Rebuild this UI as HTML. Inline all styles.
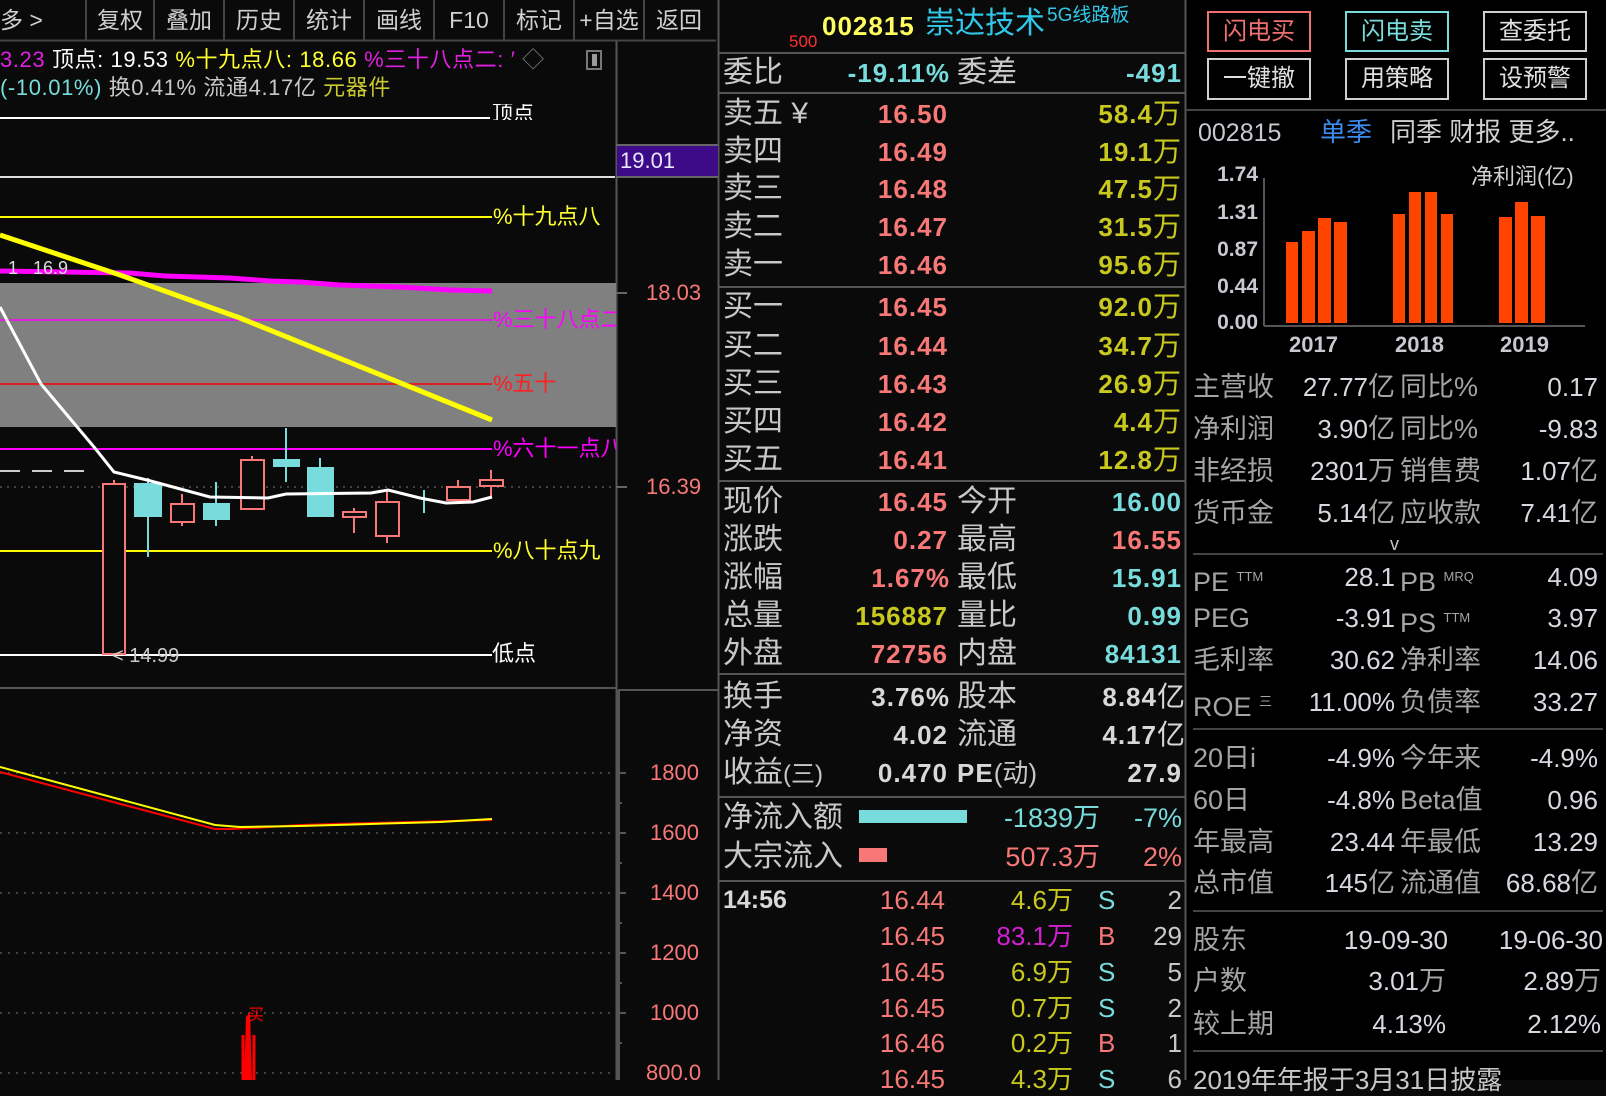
<!DOCTYPE html>
<html><head><meta charset="utf-8">
<style>
*{margin:0;padding:0;box-sizing:border-box}
body{width:1606px;height:1080px;background:#0a0a0a;overflow:hidden;position:relative;font-family:"Liberation Sans","Noto Sans CJK SC",sans-serif;color:#c8c8c8}
.t{position:absolute;white-space:nowrap;line-height:32px;height:32px}
.r{text-align:right}
.c{font-size:30px}
.n{font-size:26px;font-weight:bold;letter-spacing:1px}
.tb{position:absolute;top:0;height:40px;line-height:40px;font-size:23px;color:#d0d0d0;text-align:center}
.sal{color:#f87878}.yel{color:#c8c81e}.cy{color:#78dcdc}.wh{color:#d8d8d8}.mg{color:#e020e0}
.rp{font-size:27px;color:#a4a4a4}
.rv{font-size:26px;color:#d8d8e0}
.btn{position:absolute;border:2px solid #d0d0d0;font-size:24px;text-align:center;line-height:37px;color:#e0e0e0}
</style></head><body>
<div style="position:absolute;left:1186px;top:0;width:420px;height:1080px;background:#000"></div>
<svg width="1606" height="1080" style="position:absolute;left:0;top:0">
<line x1="0" y1="40.5" x2="716" y2="40.5" stroke="#444" stroke-width="2"/>
<g stroke="#444" stroke-width="2">
<line x1="86" y1="0" x2="86" y2="40"/><line x1="154" y1="0" x2="154" y2="40"/><line x1="224" y1="0" x2="224" y2="40"/><line x1="294" y1="0" x2="294" y2="40"/><line x1="364" y1="0" x2="364" y2="40"/><line x1="434" y1="0" x2="434" y2="40"/><line x1="504" y1="0" x2="504" y2="40"/><line x1="574" y1="0" x2="574" y2="40"/><line x1="644" y1="0" x2="644" y2="40"/>
</g>
<line x1="616.5" y1="41" x2="616.5" y2="1080" stroke="#555" stroke-width="2"/>
<line x1="718.5" y1="0" x2="718.5" y2="1080" stroke="#555" stroke-width="2"/>
<line x1="1185.5" y1="0" x2="1185.5" y2="1080" stroke="#555" stroke-width="2"/>
<rect x="617" y="145" width="101" height="32" fill="#3e0b88"/>
<line x1="616" y1="145" x2="718" y2="145" stroke="#666" stroke-width="2"/>
<line x1="616" y1="177" x2="718" y2="177" stroke="#666" stroke-width="2"/>
<rect x="0" y="283" width="616" height="144" fill="#808080"/>
<line x1="0" y1="118" x2="490" y2="118" stroke="#fff" stroke-width="2"/>
<line x1="0" y1="177" x2="615" y2="177" stroke="#ddd" stroke-width="2"/>
<line x1="0" y1="217" x2="492" y2="217" stroke="#ffff00" stroke-width="2"/>
<line x1="0" y1="320" x2="492" y2="320" stroke="#ff00ff" stroke-width="1.5"/>
<line x1="0" y1="384" x2="492" y2="384" stroke="#ff0000" stroke-width="1.5"/>
<line x1="0" y1="449" x2="492" y2="449" stroke="#ff00ff" stroke-width="2"/>
<line x1="0" y1="487" x2="616" y2="487" stroke="#555" stroke-width="1.5" stroke-dasharray="2 5"/>
<line x1="0" y1="551" x2="492" y2="551" stroke="#ffff00" stroke-width="2"/>
<line x1="0" y1="655" x2="492" y2="655" stroke="#fff" stroke-width="2"/>
<line x1="0" y1="471" x2="92" y2="471" stroke="#ccc" stroke-width="2" stroke-dasharray="20 12"/>
<line x1="616" y1="293" x2="627" y2="293" stroke="#666" stroke-width="2"/>
<line x1="616" y1="487" x2="627" y2="487" stroke="#666" stroke-width="2"/>
<polyline points="0,271 130,273 165,276 230,278 270,281 300,282 340,285 400,287 450,290 492,291" fill="none" stroke="#ff00ff" stroke-width="5"/>
<polyline points="0,235 120,275 240,318 492,420" fill="none" stroke="#ffff00" stroke-width="5"/>
<g stroke="#f87878" stroke-width="2" fill="#0a0a0a">
<line x1="114" y1="480" x2="114" y2="484"/><rect x="103" y="484" width="22" height="170"/>
<line x1="182" y1="494" x2="182" y2="526"/><rect x="171" y="504" width="23" height="18"/>
<line x1="252" y1="456" x2="252" y2="509"/><rect x="241" y="460" width="23" height="49"/>
<line x1="354" y1="508" x2="354" y2="533"/><rect x="343" y="512" width="23" height="5"/>
<line x1="387" y1="489" x2="387" y2="543"/><rect x="376" y="502" width="23" height="34"/>
<line x1="458" y1="480" x2="458" y2="503"/><rect x="447" y="487" width="23" height="13"/>
<line x1="491" y1="470" x2="491" y2="497"/><rect x="480" y="480" width="23" height="6"/>
</g>
<g stroke="#78dcdc" stroke-width="2" fill="#78dcdc">
<line x1="148" y1="478" x2="148" y2="557"/><rect x="135" y="484" width="26" height="32"/>
<line x1="216" y1="482" x2="216" y2="526"/><rect x="204" y="504" width="25" height="15"/>
<line x1="286" y1="428" x2="286" y2="482"/><rect x="274" y="460" width="25" height="6"/>
<line x1="320" y1="458" x2="320" y2="516"/><rect x="308" y="468" width="25" height="48"/>
<line x1="424" y1="490" x2="424" y2="513"/>
</g>
<polyline points="0,307 41,384 94,447 114,472 147,480 210,497 268,498 286,494 371,493 388,490 420,498 446,503 473,502 492,497" fill="none" stroke="#fff" stroke-width="3"/>
<line x1="0" y1="688" x2="616" y2="688" stroke="#555" stroke-width="2"/>
<line x1="618" y1="690" x2="718" y2="690" stroke="#555" stroke-width="2"/>
<line x1="618.5" y1="690" x2="618.5" y2="1080" stroke="#555" stroke-width="3"/>
<g stroke="#555" stroke-width="1.5" stroke-dasharray="2 6">
<line x1="0" y1="773" x2="612" y2="773"/><line x1="0" y1="833" x2="612" y2="833"/><line x1="0" y1="893" x2="612" y2="893"/><line x1="0" y1="953" x2="612" y2="953"/><line x1="0" y1="1013" x2="612" y2="1013"/><line x1="0" y1="1073" x2="612" y2="1073"/>
</g>
<g stroke="#555" stroke-width="2">
<line x1="618" y1="773" x2="626" y2="773"/><line x1="618" y1="803" x2="622" y2="803"/><line x1="618" y1="833" x2="626" y2="833"/><line x1="618" y1="863" x2="622" y2="863"/><line x1="618" y1="893" x2="626" y2="893"/><line x1="618" y1="923" x2="622" y2="923"/><line x1="618" y1="953" x2="626" y2="953"/><line x1="618" y1="983" x2="622" y2="983"/><line x1="618" y1="1013" x2="626" y2="1013"/><line x1="618" y1="1043" x2="622" y2="1043"/>
</g>
<polyline points="0,772 215,829 232,829 270,827 300,825 370,823 450,821 492,820" fill="none" stroke="#ff0000" stroke-width="2"/>
<polyline points="0,767 215,825 240,827 300,826 370,824 440,822 492,819" fill="none" stroke="#ffff00" stroke-width="2"/>
<path d="M246 1017 L250 1012 L252 1080 L244 1080 Z" fill="#ff0000"/>
<path d="M243 1035 L243 1080 M254 1035 L254 1080" stroke="#ff0000" stroke-width="3"/>
<g stroke="#555" stroke-width="2">
<line x1="719" y1="53" x2="1185" y2="53"/><line x1="719" y1="93" x2="1185" y2="93"/><line x1="719" y1="287" x2="1185" y2="287"/><line x1="719" y1="481" x2="1185" y2="481"/><line x1="719" y1="674" x2="1185" y2="674"/><line x1="719" y1="797" x2="1185" y2="797"/><line x1="719" y1="881" x2="1185" y2="881"/>
</g>
<rect x="859" y="810" width="108" height="13" fill="#78dcdc"/>
<rect x="859" y="848" width="28" height="14" fill="#f87878"/>
<g stroke="#444" stroke-width="2">
<line x1="1186" y1="110" x2="1606" y2="110"/>
<line x1="1193" y1="554" x2="1603" y2="554"/><line x1="1193" y1="729" x2="1603" y2="729"/><line x1="1193" y1="911" x2="1603" y2="911"/><line x1="1193" y1="1051" x2="1603" y2="1051"/>
</g>
<line x1="1264" y1="178" x2="1264" y2="326" stroke="#555" stroke-width="2"/>
<line x1="1264" y1="326" x2="1585" y2="326" stroke="#555" stroke-width="2"/>
<g fill="#ff4400">
<rect x="1286" y="242" width="12" height="81"/><rect x="1302" y="231" width="13" height="92"/><rect x="1318" y="218" width="13" height="105"/><rect x="1334" y="222" width="13" height="101"/>
<rect x="1393" y="214" width="12" height="109"/><rect x="1409" y="192" width="12" height="131"/><rect x="1425" y="192" width="12" height="131"/><rect x="1441" y="214" width="12" height="109"/>
<rect x="1499" y="217" width="13" height="106"/><rect x="1515" y="202" width="13" height="121"/><rect x="1531" y="216" width="14" height="107"/>
</g>
<rect x="587" y="51" width="14" height="18" fill="none" stroke="#777" stroke-width="2"/><rect x="592" y="54" width="5" height="12" fill="#999"/>
</svg>

<div class="tb" style="left:0;width:60px;text-align:left">多 &gt;</div>
<div class="tb" style="left:86px;width:68px">复权</div>
<div class="tb" style="left:154px;width:70px">叠加</div>
<div class="tb" style="left:224px;width:70px">历史</div>
<div class="tb" style="left:294px;width:70px">统计</div>
<div class="tb" style="left:364px;width:70px">画线</div>
<div class="tb" style="left:434px;width:70px">F10</div>
<div class="tb" style="left:504px;width:70px">标记</div>
<div class="tb" style="left:574px;width:70px">+自选</div>
<div class="tb" style="left:644px;width:72px;text-align:left;padding-left:12px">返回</div>

<div class="t" style="left:0;top:44px;font-size:22px;letter-spacing:0.6px"><span class="mg">3.23</span> <span style="color:#fff">顶点: 19.53</span> <span style="color:#ffff30">%十九点八: 18.66</span> <span class="mg">%三十八点二: ′</span> <span style="color:#777">◇</span></div>
<div class="t" style="left:0;top:72px;font-size:22px;letter-spacing:0.6px"><span class="cy">(-10.01%)</span> 换0.41% 流通4.17亿 <span style="color:#c8c830">元器件</span></div>

<div class="t" style="left:492px;top:104px;font-size:21px;color:#fff;height:16px;line-height:20px;overflow:hidden">顶点</div>
<div class="t" style="left:493px;top:201px;font-size:22px;color:#ffff30">%十九点八</div>
<div class="t" style="left:493px;top:304px;font-size:22px;color:#ff00ff;width:123px;overflow:hidden">%三十八点二</div>
<div class="t" style="left:493px;top:368px;font-size:22px;color:#ff2020">%五十</div>
<div class="t" style="left:493px;top:433px;font-size:22px;color:#ff00ff;width:123px;overflow:hidden">%六十一点八</div>
<div class="t" style="left:493px;top:535px;font-size:22px;color:#ffff30">%八十点九</div>
<div class="t" style="left:492px;top:638px;font-size:22px;color:#fff">低点</div>
<div class="t" style="left:112px;top:640px;font-size:20px;color:#ccc">&lt; 14.99</div>
<div class="t" style="left:8px;top:252px;font-size:18px;color:#ddd">1&nbsp;&nbsp;&nbsp;16.9</div>
<div class="t" style="left:248px;top:1000px;font-size:16px;color:#ff0000">买</div>

<div class="t" style="left:620px;top:145px;font-size:22px;color:#e8e8ff">19.01</div>
<div class="t sal" style="left:646px;top:277px;font-size:22px">18.03</div>
<div class="t sal" style="left:646px;top:471px;font-size:22px">16.39</div>
<div class="t sal" style="left:650px;top:757px;font-size:22px">1800</div>
<div class="t sal" style="left:650px;top:817px;font-size:22px">1600</div>
<div class="t sal" style="left:650px;top:877px;font-size:22px">1400</div>
<div class="t sal" style="left:650px;top:937px;font-size:22px">1200</div>
<div class="t sal" style="left:650px;top:997px;font-size:22px">1000</div>
<div class="t sal" style="left:646px;top:1057px;font-size:22px">800.0</div>

<div class="t" style="left:789px;top:26px;font-size:17px;color:#ff3030">500</div>
<div class="t" style="left:822px;top:10px;font-size:26px;font-weight:bold;color:#ffff60;letter-spacing:1px">002815</div>
<div class="t" style="left:925px;top:8px;font-size:30px;color:#30c8e8">崇达技术</div>
<div class="t" style="left:1047px;top:0px;font-size:19px;color:#30c8e8">5G线路板</div>

<div class="t c" style="left:723px;top:57px">委比</div>
<div class="t n r cy" style="right:656px;top:57px">-19.11%</div>
<div class="t c" style="left:957px;top:57px">委差</div>
<div class="t n r cy" style="right:424px;top:57px">-491</div>

<div class="t c" style="left:723px;top:98px">卖五 ¥</div>
<div class="t c" style="left:723px;top:136px">卖四</div>
<div class="t c" style="left:723px;top:173px">卖三</div>
<div class="t c" style="left:723px;top:211px">卖二</div>
<div class="t c" style="left:723px;top:249px">卖一</div>
<div class="t n r sal" style="right:658px;top:98px">16.50</div>
<div class="t n r sal" style="right:658px;top:136px">16.49</div>
<div class="t n r sal" style="right:658px;top:173px">16.48</div>
<div class="t n r sal" style="right:658px;top:211px">16.47</div>
<div class="t n r sal" style="right:658px;top:249px">16.46</div>
<div class="t n r yel" style="right:424px;top:98px">58.4<span style="font-weight:normal;font-size:28px">万</span></div>
<div class="t n r yel" style="right:424px;top:136px">19.1<span style="font-weight:normal;font-size:28px">万</span></div>
<div class="t n r yel" style="right:424px;top:173px">47.5<span style="font-weight:normal;font-size:28px">万</span></div>
<div class="t n r yel" style="right:424px;top:211px">31.5<span style="font-weight:normal;font-size:28px">万</span></div>
<div class="t n r yel" style="right:424px;top:249px">95.6<span style="font-weight:normal;font-size:28px">万</span></div>

<div class="t c" style="left:723px;top:291px">买一</div>
<div class="t c" style="left:723px;top:330px">买二</div>
<div class="t c" style="left:723px;top:368px">买三</div>
<div class="t c" style="left:723px;top:406px">买四</div>
<div class="t c" style="left:723px;top:444px">买五</div>
<div class="t n r sal" style="right:658px;top:291px">16.45</div>
<div class="t n r sal" style="right:658px;top:330px">16.44</div>
<div class="t n r sal" style="right:658px;top:368px">16.43</div>
<div class="t n r sal" style="right:658px;top:406px">16.42</div>
<div class="t n r sal" style="right:658px;top:444px">16.41</div>
<div class="t n r yel" style="right:424px;top:291px">92.0<span style="font-weight:normal;font-size:28px">万</span></div>
<div class="t n r yel" style="right:424px;top:330px">34.7<span style="font-weight:normal;font-size:28px">万</span></div>
<div class="t n r yel" style="right:424px;top:368px">26.9<span style="font-weight:normal;font-size:28px">万</span></div>
<div class="t n r yel" style="right:424px;top:406px">4.4<span style="font-weight:normal;font-size:28px">万</span></div>
<div class="t n r yel" style="right:424px;top:444px">12.8<span style="font-weight:normal;font-size:28px">万</span></div>

<div class="t c" style="left:723px;top:486px">现价</div><div class="t n r sal" style="right:658px;top:486px">16.45</div><div class="t c" style="left:957px;top:486px">今开</div><div class="t n r cy" style="right:424px;top:486px">16.00</div>
<div class="t c" style="left:723px;top:524px">涨跌</div><div class="t n r sal" style="right:658px;top:524px">0.27</div><div class="t c" style="left:957px;top:524px">最高</div><div class="t n r sal" style="right:424px;top:524px">16.55</div>
<div class="t c" style="left:723px;top:562px">涨幅</div><div class="t n r sal" style="right:656px;top:562px">1.67%</div><div class="t c" style="left:957px;top:562px">最低</div><div class="t n r cy" style="right:424px;top:562px">15.91</div>
<div class="t c" style="left:723px;top:600px">总量</div><div class="t n r yel" style="right:658px;top:600px">156887</div><div class="t c" style="left:957px;top:600px">量比</div><div class="t n r cy" style="right:424px;top:600px">0.99</div>
<div class="t c" style="left:723px;top:638px">外盘</div><div class="t n r sal" style="right:658px;top:638px">72756</div><div class="t c" style="left:957px;top:638px">内盘</div><div class="t n r cy" style="right:424px;top:638px">84131</div>

<div class="t c" style="left:723px;top:681px">换手</div><div class="t n r wh" style="right:656px;top:681px">3.76%</div><div class="t c" style="left:957px;top:681px">股本</div><div class="t n r wh" style="right:420px;top:681px">8.84<span style="font-weight:normal;font-size:28px">亿</span></div>
<div class="t c" style="left:723px;top:719px">净资</div><div class="t n r wh" style="right:658px;top:719px">4.02</div><div class="t c" style="left:957px;top:719px">流通</div><div class="t n r wh" style="right:420px;top:719px">4.17<span style="font-weight:normal;font-size:28px">亿</span></div>
<div class="t c" style="left:723px;top:757px">收益<span style="font-size:24px">(三)</span></div><div class="t n r wh" style="right:658px;top:757px">0.470</div><div class="t" style="left:957px;top:757px"><span class="n wh">PE</span><span style="font-size:26px">(动)</span></div><div class="t n r wh" style="right:424px;top:757px">27.9</div>

<div class="t c" style="left:723px;top:802px">净流入额</div><div class="t r cy" style="right:506px;top:802px;font-size:27px">-1839万</div><div class="t r cy" style="right:424px;top:802px;font-size:27px">-7%</div>
<div class="t c" style="left:723px;top:841px">大宗流入</div><div class="t r sal" style="right:506px;top:841px;font-size:27px">507.3万</div><div class="t r sal" style="right:424px;top:841px;font-size:27px">2%</div>

<div class="t wh" style="left:723px;top:884px;font-size:25px;font-weight:bold">14:56</div>
<div class="t r sal" style="right:661px;top:884px;font-size:26px">16.44</div><div class="t r yel" style="right:533px;top:884px;font-size:26px">4.6万</div><div class="t cy" style="left:1098px;top:884px;font-size:26px">S</div><div class="t r" style="right:424px;top:884px;font-size:26px">2</div>
<div class="t r sal" style="right:661px;top:920px;font-size:26px">16.45</div><div class="t r" style="right:533px;top:920px;font-size:26px;color:#d020d0">83.1万</div><div class="t sal" style="left:1098px;top:920px;font-size:26px">B</div><div class="t r" style="right:424px;top:920px;font-size:26px">29</div>
<div class="t r sal" style="right:661px;top:956px;font-size:26px">16.45</div><div class="t r yel" style="right:533px;top:956px;font-size:26px">6.9万</div><div class="t cy" style="left:1098px;top:956px;font-size:26px">S</div><div class="t r" style="right:424px;top:956px;font-size:26px">5</div>
<div class="t r sal" style="right:661px;top:992px;font-size:26px">16.45</div><div class="t r yel" style="right:533px;top:992px;font-size:26px">0.7万</div><div class="t cy" style="left:1098px;top:992px;font-size:26px">S</div><div class="t r" style="right:424px;top:992px;font-size:26px">2</div>
<div class="t r sal" style="right:661px;top:1027px;font-size:26px">16.46</div><div class="t r yel" style="right:533px;top:1027px;font-size:26px">0.2万</div><div class="t sal" style="left:1098px;top:1027px;font-size:26px">B</div><div class="t r" style="right:424px;top:1027px;font-size:26px">1</div>
<div class="t r sal" style="right:661px;top:1063px;font-size:26px">16.45</div><div class="t r yel" style="right:533px;top:1063px;font-size:26px">4.3万</div><div class="t cy" style="left:1098px;top:1063px;font-size:26px">S</div><div class="t r" style="right:424px;top:1063px;font-size:26px">6</div>

<div class="btn" style="left:1207px;top:11px;width:104px;height:41px;border-color:#f07070;color:#f07070">闪电买</div>
<div class="btn" style="left:1345px;top:11px;width:104px;height:41px;border-color:#78dcdc;color:#78dcdc">闪电卖</div>
<div class="btn" style="left:1483px;top:11px;width:104px;height:41px">查委托</div>
<div class="btn" style="left:1207px;top:58px;width:104px;height:42px">一键撤</div>
<div class="btn" style="left:1345px;top:58px;width:104px;height:42px">用策略</div>
<div class="btn" style="left:1483px;top:58px;width:104px;height:42px">设预警</div>

<div class="t" style="left:1198px;top:117px;font-size:25px;color:#c8c8d0">002815</div>
<div class="t" style="left:1320px;top:116px;font-size:26px;color:#3c8cf0">单季</div>
<div class="t" style="left:1390px;top:116px;font-size:26px;color:#d0d0d0">同季 财报 更多..</div>
<div class="t" style="left:1471px;top:161px;font-size:22px;color:#d0d0d0">净利润(亿)</div>
<div class="t r" style="right:348px;top:159px;font-size:21px;color:#c8c8d0;font-weight:bold">1.74</div>
<div class="t r" style="right:348px;top:197px;font-size:21px;color:#c8c8d0;font-weight:bold">1.31</div>
<div class="t r" style="right:348px;top:234px;font-size:21px;color:#c8c8d0;font-weight:bold">0.87</div>
<div class="t r" style="right:348px;top:271px;font-size:21px;color:#c8c8d0;font-weight:bold">0.44</div>
<div class="t r" style="right:348px;top:307px;font-size:21px;color:#c8c8d0;font-weight:bold">0.00</div>
<div class="t" style="left:1289px;top:329px;font-size:22px;color:#c8c8d0;font-weight:bold">2017</div>
<div class="t" style="left:1395px;top:329px;font-size:22px;color:#c8c8d0;font-weight:bold">2018</div>
<div class="t" style="left:1500px;top:329px;font-size:22px;color:#c8c8d0;font-weight:bold">2019</div>

<div class="t rp" style="left:1193px;top:371px">主营收</div><div class="t rv r" style="right:211px;top:371px">27.77<span class="rp">亿</span></div><div class="t rp" style="left:1400px;top:371px">同比%</div><div class="t rv r" style="right:8px;top:371px">0.17</div>
<div class="t rp" style="left:1193px;top:413px">净利润</div><div class="t rv r" style="right:211px;top:413px">3.90<span class="rp">亿</span></div><div class="t rp" style="left:1400px;top:413px">同比%</div><div class="t rv r" style="right:8px;top:413px">-9.83</div>
<div class="t rp" style="left:1193px;top:455px">非经损</div><div class="t rv r" style="right:211px;top:455px">2301<span class="rp">万</span></div><div class="t rp" style="left:1400px;top:455px">销售费</div><div class="t rv r" style="right:8px;top:455px">1.07<span class="rp">亿</span></div>
<div class="t rp" style="left:1193px;top:497px">货币金</div><div class="t rv r" style="right:211px;top:497px">5.14<span class="rp">亿</span></div><div class="t rp" style="left:1400px;top:497px">应收款</div><div class="t rv r" style="right:8px;top:497px">7.41<span class="rp">亿</span></div>
<div class="t" style="left:1390px;top:528px;font-size:18px;color:#c8c8c8">v</div>

<div class="t rp" style="left:1193px;top:561px">PE <sup style="font-size:13px">TTM</sup></div><div class="t rv r" style="right:211px;top:561px">28.1</div><div class="t rp" style="left:1400px;top:561px">PB <sup style="font-size:13px">MRQ</sup></div><div class="t rv r" style="right:8px;top:561px">4.09</div>
<div class="t rp" style="left:1193px;top:602px">PEG</div><div class="t rv r" style="right:211px;top:602px">-3.91</div><div class="t rp" style="left:1400px;top:602px">PS <sup style="font-size:13px">TTM</sup></div><div class="t rv r" style="right:8px;top:602px">3.97</div>
<div class="t rp" style="left:1193px;top:644px">毛利率</div><div class="t rv r" style="right:211px;top:644px">30.62</div><div class="t rp" style="left:1400px;top:644px">净利率</div><div class="t rv r" style="right:8px;top:644px">14.06</div>
<div class="t rp" style="left:1193px;top:686px">ROE <sup style="font-size:13px">三</sup></div><div class="t rv r" style="right:211px;top:686px">11.00%</div><div class="t rp" style="left:1400px;top:686px">负债率</div><div class="t rv r" style="right:8px;top:686px">33.27</div>

<div class="t rp" style="left:1193px;top:742px">20日i</div><div class="t rv r" style="right:211px;top:742px">-4.9%</div><div class="t rp" style="left:1400px;top:742px">今年来</div><div class="t rv r" style="right:8px;top:742px">-4.9%</div>
<div class="t rp" style="left:1193px;top:784px">60日</div><div class="t rv r" style="right:211px;top:784px">-4.8%</div><div class="t rp" style="left:1400px;top:784px">Beta值</div><div class="t rv r" style="right:8px;top:784px">0.96</div>
<div class="t rp" style="left:1193px;top:826px">年最高</div><div class="t rv r" style="right:211px;top:826px">23.44</div><div class="t rp" style="left:1400px;top:826px">年最低</div><div class="t rv r" style="right:8px;top:826px">13.29</div>
<div class="t rp" style="left:1193px;top:867px">总市值</div><div class="t rv r" style="right:211px;top:867px">145<span class="rp">亿</span></div><div class="t rp" style="left:1400px;top:867px">流通值</div><div class="t rv r" style="right:8px;top:867px">68.68<span class="rp">亿</span></div>

<div class="t rp" style="left:1193px;top:924px">股东</div><div class="t rv r" style="right:158px;top:924px">19-09-30</div><div class="t rv r" style="right:3px;top:924px">19-06-30</div>
<div class="t rp" style="left:1193px;top:965px">户数</div><div class="t rv r" style="right:160px;top:965px">3.01<span class="rp">万</span></div><div class="t rv r" style="right:5px;top:965px">2.89<span class="rp">万</span></div>
<div class="t rp" style="left:1193px;top:1008px">较上期</div><div class="t rv r" style="right:160px;top:1008px">4.13%</div><div class="t rv r" style="right:5px;top:1008px">2.12%</div>
<div class="t" style="left:1193px;top:1064px;font-size:26px;color:#c8c8c8">2019年年报于3月31日披露</div>
</body></html>
